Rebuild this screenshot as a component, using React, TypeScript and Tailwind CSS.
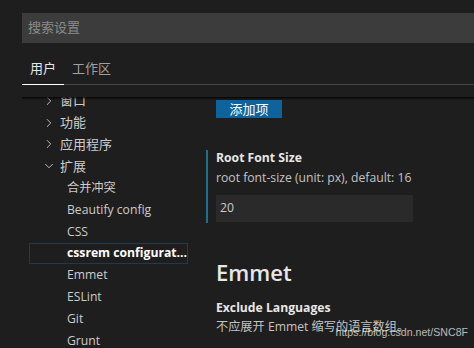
import { ChevronRight, ChevronDown } from "lucide-react";

const font = {
  fontFamily: '"Open Sans", "Noto Sans", "Noto Sans CJK SC", sans-serif',
};

type Row = { label: string; level: 0 | 1; chevron?: "right" | "down"; selected?: boolean };

const rows: Row[] = [
  { label: "窗口", level: 0, chevron: "right" },
  { label: "功能", level: 0, chevron: "right" },
  { label: "应用程序", level: 0, chevron: "right" },
  { label: "扩展", level: 0, chevron: "down" },
  { label: "合并冲突", level: 1 },
  { label: "Beautify config", level: 1 },
  { label: "CSS", level: 1 },
  { label: "cssrem configurat...", level: 1, selected: true },
  { label: "Emmet", level: 1 },
  { label: "ESLint", level: 1 },
  { label: "Git", level: 1 },
  { label: "Grunt", level: 1 },
];

function TreeRow({ row }: { row: Row }) {
  if (row.selected) {
    return (
      <div className="h-[21.8px] flex items-center pl-[7px]">
        <div className="h-full w-[159px] border border-[#1f3c4c] flex items-center pl-[37px] text-[12.2px] font-bold text-white whitespace-nowrap">
          {row.label}
        </div>
      </div>
    );
  }
  return (
    <div className="h-[21.8px] flex items-center text-[12.2px] text-[#cccccc] whitespace-nowrap">
      {row.level === 0 ? (
        <>
          <span className="w-[38px] flex justify-end pr-[4px] text-[#c5c5c5]">
            {row.chevron === "down" ? (
              <ChevronDown size={14} strokeWidth={1.6} />
            ) : (
              <ChevronRight size={14} strokeWidth={1.6} />
            )}
          </span>
          <span className="text-[13px]">{row.label}</span>
        </>
      ) : (
        <span className="pl-[45px]">{row.label}</span>
      )}
    </div>
  );
}

export default function App() {
  return (
    <div
      className="relative w-[474px] h-[348px] bg-[#1e1e1e] overflow-hidden"
      style={font}
    >
      {/* Header */}
      <div className="pl-[22px] pt-[13px]">
        <div className="h-[30px] bg-[#3c3c3c] flex items-center pl-[6px] text-[13px] text-[#8b8b8b]">
          搜索设置
        </div>
        <div className="h-[42px] flex items-end border-b border-[#454545]">
          <div className="px-[8px] pb-[6px] leading-[20px] text-[13px] text-[#e7e7e7] border-b border-white -mb-px">
            用户
          </div>
          <div className="px-[8px] pb-[6px] leading-[20px] text-[13px] text-[#a0a0a0]">
            工作区
          </div>
        </div>
      </div>

      {/* Body */}
      <div className="relative mt-[12px] flex h-[251px] overflow-hidden">
        <div className="absolute top-0 left-[22px] right-0 h-[3px] bg-gradient-to-b from-[#000000cc] to-transparent z-10" />

        <div className="w-[184px] ml-[22px] -mt-[7px] shrink-0">
          {rows.map((r) => (
            <TreeRow key={r.label} row={r} />
          ))}
        </div>

        <div className="flex-1">
          <div className="pl-[10px] pt-[3px]">
            <div className="h-[18px] w-[66px] bg-[#0e639c] text-white text-[13px] leading-[18px] flex items-center justify-center">
              添加项
            </div>
          </div>

          <div className="mt-[32px] border-l-2 border-[#1b6f93] pl-[8px] pb-px">
            <div className="text-[12.2px] leading-[16px] font-bold text-[#e7e7e7]">
              Root Font Size
            </div>
            <div className="mt-[2px] text-[12.2px] leading-[20px] text-[#c4c4c4] whitespace-nowrap">
              root font-size (unit: px), default: 16
            </div>
            <div className="mt-[7px] h-[27px] w-[197px] bg-[#2a2a2a] flex items-center pl-[4px] text-[12.2px] text-[#cccccc]">
              20
            </div>
          </div>

          <div className="mt-[34px] pl-[10px] text-[22px] leading-[30px] font-semibold text-[#e7e7e7]">
            Emmet
          </div>
          <div className="mt-[12px] pl-[10px] text-[12.2px] leading-[18px] font-bold text-[#e7e7e7]">
            Exclude Languages
          </div>
          <div className="pl-[10px] text-[12.2px] leading-[20px] text-[#c4c4c4] whitespace-nowrap">
            不应展开 Emmet 缩写的语言数组。
          </div>
        </div>
      </div>

      <div
        className="absolute right-[6px] bottom-[7px] text-[10.6px] text-white/70 whitespace-nowrap"
        style={{ fontFamily: '"Liberation Sans", Arial, sans-serif' }}
      >
        https://blog.csdn.net/SNC8F
      </div>
    </div>
  );
}
